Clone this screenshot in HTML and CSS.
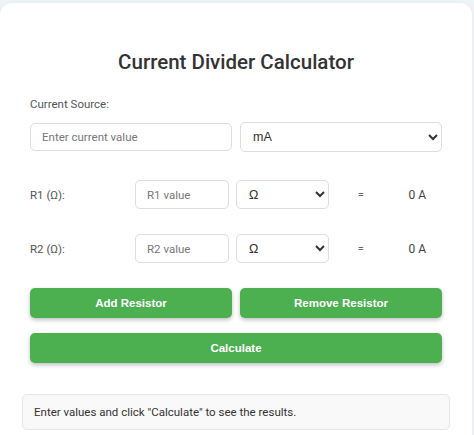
FILE: index.html
```html
<!DOCTYPE html>
<html lang="en">
<head>
  <meta charset="UTF-8" />
  <meta name="viewport" content="width=device-width, initial-scale=1.0" />
  <title>Current Divider Calculator</title>
  <link rel="stylesheet" href="styles.css">
</head>
<body>
  <div class="card">
    <h1>Current Divider Calculator</h1>
    <div class="form">
      <label class="source-label" for="current">Current Source:</label>
      <div class="source-row">
        <input id="current" type="number" placeholder="Enter current value" />
        <select id="currentUnit">
          <option>mA</option>
          <option>A</option>
          <option>µA</option>
        </select>
      </div>

      <div id="resistors">
        <div class="resistor-row">
          <label>R1 (Ω):</label>
          <input type="number" placeholder="R1 value" />
          <select>
            <option>Ω</option>
            <option>kΩ</option>
            <option>MΩ</option>
          </select>
          <span class="equals">=</span>
          <span class="current-out">0 A</span>
        </div>
        <div class="resistor-row">
          <label>R2 (Ω):</label>
          <input type="number" placeholder="R2 value" />
          <select>
            <option>Ω</option>
            <option>kΩ</option>
            <option>MΩ</option>
          </select>
          <span class="equals">=</span>
          <span class="current-out">0 A</span>
        </div>
      </div>

      <div class="actions">
        <button>Add Resistor</button>
        <button>Remove Resistor</button>
      </div>
      <button class="calc">Calculate</button>
    </div>

    <div id="result" class="result">Enter values and click "Calculate" to see the results.</div>
  </div>
</body>
</html>
```

FILE: styles.css
```css
body {
  font-family: Roboto, 'Liberation Sans', sans-serif;
  margin: 0;
  padding: 3px 0 0;
  background: #eef5f9;
  color: #333;
}
.card {
  background: #fff;
  border-radius: 12px;
  padding: 46px 22px 20px;
  margin: 0 2px 0 0;
  box-shadow: 0 0 6px rgba(0,0,0,0.05);
}
h1 {
  margin: 0 0 22px;
  font-size: 20.5px;
  line-height: 26px;
  font-weight: 500;
  text-align: center;
  color: #333;
}
.form {
  padding: 0 8px;
}
.source-label {
  display: block;
  font-size: 11.5px;
  line-height: 14px;
  color: #555;
  margin-bottom: 11px;
}
input, select {
  box-sizing: border-box;
  border: 1px solid #ddd;
  border-radius: 5px;
  background: #fff;
  color: #333;
  margin: 0;
}
input {
  font-family: Roboto, 'Liberation Sans', sans-serif;
  font-size: 11.5px;
  height: 28px;
  padding: 0 11px;
}
input::placeholder {
  color: #777;
}
select {
  font-family: 'Liberation Sans', Arial, sans-serif;
  font-size: 12.5px;
  height: 30px;
  padding: 0 8px;
}
.source-row {
  display: grid;
  grid-template-columns: 1fr 1fr;
  gap: 8px;
  align-items: center;
}
#resistors {
  margin-top: 28px;
}
.resistor-row {
  display: grid;
  grid-template-columns: 98px 94px 93px 1fr 1fr;
  gap: 7px;
  align-items: center;
  margin-bottom: 25px;
}
.resistor-row label {
  font-size: 11.5px;
  color: #555;
}
.resistor-row input {
  height: 29px;
  width: 100%;
}
.resistor-row select {
  height: 29px;
  width: 100%;
}
.equals, .current-out {
  text-align: center;
  font-size: 12px;
  color: #444;
}
.equals {
  color: #666;
  font-size: 11px;
}
button {
  font-family: 'Liberation Sans', Arial, sans-serif;
  font-size: 11.5px;
  font-weight: bold;
  color: #fff;
  background: #4caf50;
  border: none;
  border-radius: 5px;
  height: 30px;
  box-shadow: 0 2px 4px rgba(0,0,0,0.25);
  cursor: pointer;
}
.actions {
  display: grid;
  grid-template-columns: 1fr 1fr;
  gap: 8px;
}
.calc {
  display: block;
  width: 100%;
  margin-top: 15px;
}
.result {
  margin-top: 31px;
  background: #f9f9f9;
  border: 1px solid #e6e6e6;
  border-radius: 5px;
  height: 36px;
  box-sizing: border-box;
  padding: 0 11px;
  display: flex;
  align-items: center;
  font-size: 11.5px;
  color: #333;
}
```
